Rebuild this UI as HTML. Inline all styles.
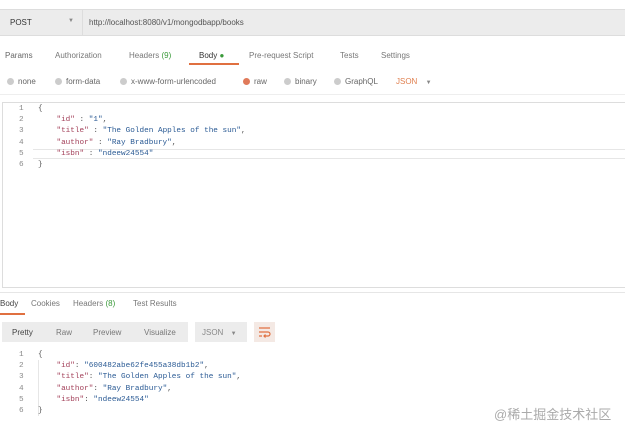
<!DOCTYPE html>
<html><head><style>
*{margin:0;padding:0;box-sizing:border-box}
body{width:625px;height:435px;background:#fff;position:relative;overflow:hidden;font-family:"Liberation Sans",sans-serif;font-size:8px;color:#555}
.a{position:absolute;white-space:nowrap}
.mono{font-family:"Liberation Mono",monospace;font-size:7.7px}
.k{color:#a3415a}.v{color:#2a5a94}.n{color:#888}
.dot{display:inline-block;width:7px;height:7px;border-radius:50%;background:#ccc;vertical-align:-1px;margin-right:4px}
</style></head><body>
<div class="a" style="left:0;top:9px;width:625px;height:27px;background:#ececec;border-top:1px solid #ddd;border-bottom:1px solid #ddd"></div>
<div class="a" style="left:82px;top:10px;width:1px;height:25px;background:#ddd"></div>
<div class="a" style="left:10px;top:18px;color:#333">POST</div>
<div class="a" style="left:68px;top:18px;color:#888;font-size:6px">▼</div>
<div class="a" style="left:89px;top:18px;color:#555">http://localhost:8080/v1/mongodbapp/books</div>

<div class="a" style="top:51px;left:5px;color:#666">Params</div>
<div class="a" style="top:51px;left:55px;color:#777">Authorization</div>
<div class="a" style="top:51px;left:129px;color:#777">Headers <span style="color:#3a9a3a">(9)</span></div>
<div class="a" style="top:51px;left:199px;color:#333">Body <span style="color:#3a9a3a">●</span></div>
<div class="a" style="left:189px;top:63px;width:50px;height:2px;background:#e07040"></div>
<div class="a" style="top:51px;left:249px;color:#777">Pre-request Script</div>
<div class="a" style="top:51px;left:340px;color:#777">Tests</div>
<div class="a" style="top:51px;left:381px;color:#777">Settings</div>

<div class="a" style="top:77px;left:7px;color:#666"><span class="dot"></span>none</div>
<div class="a" style="top:77px;left:55px;color:#666"><span class="dot"></span>form-data</div>
<div class="a" style="top:77px;left:120px;color:#666"><span class="dot"></span>x-www-form-urlencoded</div>
<div class="a" style="top:77px;left:243px;color:#666"><span class="dot" style="background:#e07a5a"></span>raw</div>
<div class="a" style="top:77px;left:284px;color:#666"><span class="dot"></span>binary</div>
<div class="a" style="top:77px;left:334px;color:#666"><span class="dot"></span>GraphQL</div>
<div class="a" style="top:77px;left:396px;color:#e08050">JSON <span style="color:#888;font-size:6px;margin-left:6px">▼</span></div>
<div class="a" style="left:0;top:94px;width:625px;height:1px;background:#eee"></div>

<div class="a" style="left:2px;top:102px;width:630px;height:186px;border:1px solid #ddd"></div>
<div class="a" style="left:33px;top:149px;width:600px;height:10px;border-top:1px solid #e6e6e6;border-bottom:1px solid #e6e6e6"></div>
<div class="a mono n" style="left:19px;top:104px;line-height:11.2px;text-align:right">1<br>2<br>3<br>4<br>5<br>6</div>
<div class="a mono" style="left:38px;top:104px;line-height:11.2px;color:#555">{<br>&nbsp;&nbsp;&nbsp;&nbsp;<span class="k">"id"</span> : <span class="v">"1"</span>,<br>&nbsp;&nbsp;&nbsp;&nbsp;<span class="k">"title"</span> : <span class="v">"The Golden Apples of the sun"</span>,<br>&nbsp;&nbsp;&nbsp;&nbsp;<span class="k">"author"</span> : <span class="v">"Ray Bradbury"</span>,<br>&nbsp;&nbsp;&nbsp;&nbsp;<span class="k">"isbn"</span> : <span class="v">"ndeew24554"</span><br>}</div>
<div class="a" style="left:0;top:292px;width:625px;height:1px;background:#e6e6e6"></div>

<div class="a" style="top:299px;left:0;color:#444">Body</div>
<div class="a" style="left:0;top:313px;width:25px;height:2px;background:#e07040"></div>
<div class="a" style="top:299px;left:31px;color:#777">Cookies</div>
<div class="a" style="top:299px;left:73px;color:#777">Headers <span style="color:#3a9a3a">(8)</span></div>
<div class="a" style="top:299px;left:133px;color:#777">Test Results</div>

<div class="a" style="left:2px;top:322px;width:186px;height:20px;background:#ececec"></div>
<div class="a" style="top:328px;left:12px;color:#444">Pretty</div>
<div class="a" style="top:328px;left:56px;color:#777">Raw</div>
<div class="a" style="top:328px;left:93px;color:#777">Preview</div>
<div class="a" style="top:328px;left:144px;color:#777">Visualize</div>
<div class="a" style="left:195px;top:322px;width:52px;height:20px;background:#ececec"></div>
<div class="a" style="top:328px;left:202px;color:#888">JSON <span style="font-size:6px;margin-left:5px">▼</span></div>
<div class="a" style="left:254px;top:322px;width:21px;height:20px;background:#f4e9e4"></div>
<svg class="a" style="left:258px;top:326px" width="13" height="12" viewBox="0 0 13 12"><path d="M1 2H12M1 6H10a2 2 0 0 1 0 4H6M7.5 8.5L6 10l1.5 1.5M1 10H4" stroke="#e07040" stroke-width="1.2" fill="none"/></svg>

<div class="a mono n" style="left:19px;top:350px;line-height:11.2px">1<br>2<br>3<br>4<br>5<br>6</div>
<div class="a" style="left:38px;top:360px;width:1px;height:56px;background:#e6e6e6"></div>
<div class="a mono" style="left:38px;top:350px;line-height:11.2px;color:#555">{<br>&nbsp;&nbsp;&nbsp;&nbsp;<span class="k">"id"</span>: <span class="v">"600482abe62fe455a38db1b2"</span>,<br>&nbsp;&nbsp;&nbsp;&nbsp;<span class="k">"title"</span>: <span class="v">"The Golden Apples of the sun"</span>,<br>&nbsp;&nbsp;&nbsp;&nbsp;<span class="k">"author"</span>: <span class="v">"Ray Bradbury"</span>,<br>&nbsp;&nbsp;&nbsp;&nbsp;<span class="k">"isbn"</span>: <span class="v">"ndeew24554"</span><br>}</div>
<div class="a" style="left:494px;top:404px;font-size:13px;color:#aaa;font-family:'Liberation Sans','Noto Sans CJK SC',sans-serif">@稀土掘金技术社区</div>
</body></html>
